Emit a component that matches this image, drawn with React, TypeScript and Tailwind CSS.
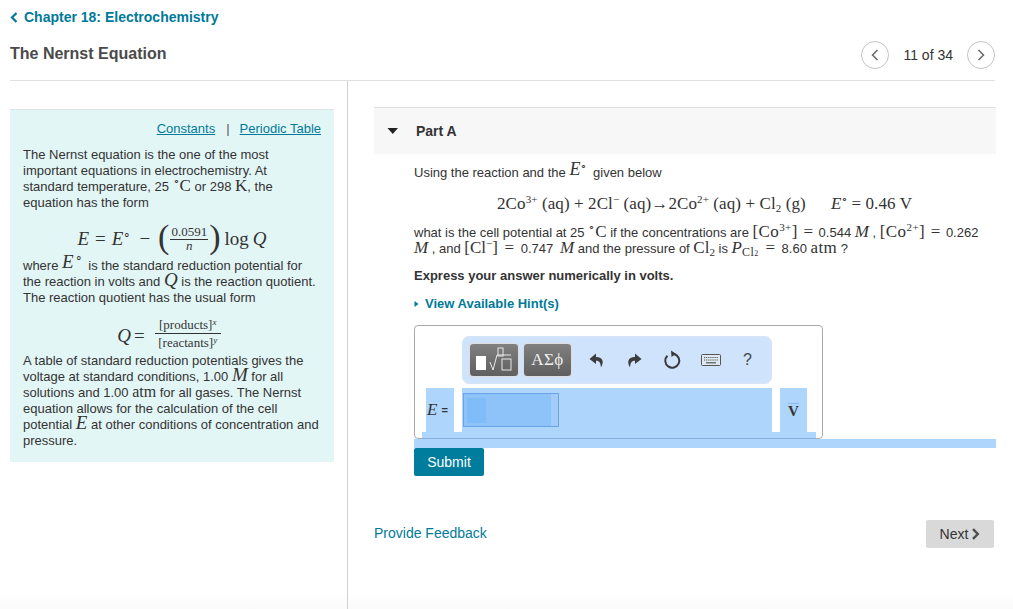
import React from "react";

const serif = "font-['Liberation_Serif',serif]";

function mathCls(className: string) {
  const size = className.includes("text-[") ? "" : "text-[17px]";
  const lead = className.includes("leading-[") ? "" : "leading-[0]";
  return `${serif} ${size} ${lead} ${className}`;
}
function I({ children, className = "" }: { children: React.ReactNode; className?: string }) {
  return <span className={`italic ${mathCls(className)}`}>{children}</span>;
}
function R({ children, className = "" }: { children: React.ReactNode; className?: string }) {
  return <span className={mathCls(className)}>{children}</span>;
}
function Sup({ children }: { children: React.ReactNode }) {
  return <span className="relative top-[-6px] text-[11px] leading-[0]">{children}</span>;
}
function Sub({ children }: { children: React.ReactNode }) {
  return <span className="relative top-[3px] text-[11px] leading-[0]">{children}</span>;
}
function L({ children, className = "" }: { children: React.ReactNode; className?: string }) {
  return <div className={`h-4 leading-4 whitespace-nowrap ${className}`}>{children}</div>;
}

function Undo({ flip = false }: { flip?: boolean }) {
  return (
    <svg width="15" height="15" viewBox="0 0 15 15" className={flip ? "-scale-x-100" : ""}>
      <path d="M7 0.5 L0.5 6 L7 11 V7.8 C10 7.8 11.6 9.2 12 14.5 C15 9.5 14.5 4 7 4 Z" fill="#3d3d3d" />
    </svg>
  );
}

export default function App() {
  return (
    <div className="w-[1013px] h-[609px] overflow-hidden bg-[linear-gradient(to_bottom,#ffffff_97%,#fafafa_100%)] font-['Liberation_Sans',sans-serif] text-[#333] text-[13px]">
      <header className="mx-[10px] w-[985px] h-[81px] border-b border-[#e0e0e0] pt-[9px]">
        <div className="flex items-center gap-[5px] h-4 text-[14px] font-bold text-[#007a99]">
          <svg width="9" height="11" viewBox="0 0 9 11">
            <path d="M6.5 1 L2 5.5 L6.5 10" fill="none" stroke="#007a99" strokeWidth="2.2" />
          </svg>
          <span>Chapter 18: Electrochemistry</span>
        </div>
        <div className="flex items-center justify-between mt-[13px]">
          <h1 className="text-[16px] font-bold text-[#4a4a4a] leading-[30px]">The Nernst Equation</h1>
          <div className="flex items-center mt-[3px]">
            <button className="w-7 h-7 rounded-full border border-[#c4c4c4] flex items-center justify-center">
              <svg width="10" height="14" viewBox="0 0 10 14"><path d="M7.5 2 L2.5 7 L7.5 12" fill="none" stroke="#666" strokeWidth="1.5" /></svg>
            </button>
            <span className="ml-[14px] mr-[14px] text-[14px] text-[#333]">11 of 34</span>
            <button className="w-7 h-7 rounded-full border border-[#c4c4c4] flex items-center justify-center">
              <svg width="10" height="14" viewBox="0 0 10 14"><path d="M2.5 2 L7.5 7 L2.5 12" fill="none" stroke="#666" strokeWidth="1.5" /></svg>
            </button>
          </div>
        </div>
      </header>

      <div className="flex h-[528px]">
        <aside className="w-[348px] shrink-0 border-r border-[#d0d0d0] pl-[10px] pr-[13px] pt-[28px]">
          <div className="h-[353px] bg-[#e3f6f6] border-t border-[#dbe5e5] px-[13px] pt-[11px]">
            <div className="flex justify-end gap-[10px] h-4 leading-4 text-[#007a99]">
              <span className="underline mr-px">Constants</span>
              <span className="text-[#555]">|</span>
              <span className="underline">Periodic Table</span>
            </div>
            <div className="mt-[10px]">
              <L>The Nernst equation is the one of the most</L>
              <L>important equations in electrochemistry. At</L>
              <L>standard temperature, 25 <R><Sup>∘</Sup>C</R> or 298 <R>K</R>, the</L>
              <L>equation has the form</L>
            </div>
            <div className="h-[43px] mt-[3px] pt-[6px] flex items-center justify-center">
              <I className="text-[19px] leading-[20px]">E</I>
              <R className="text-[19px] leading-[20px] mx-[6px]">=</R>
              <I className="text-[19px] leading-[20px]">E</I>
              <R className="relative top-[-4px] text-[12px] leading-[20px]">∘</R>
              <R className="text-[19px] leading-[20px] mx-[8px]">−</R>
              <R className="text-[34px] leading-[36px] font-thin relative top-[-2px]">(</R>
              <span className="flex flex-col items-center mx-[1px]">
                <R className="text-[13px] leading-[14px] border-b border-[#333] px-[1px]">0.0591</R>
                <I className="text-[13px] leading-[12px]">n</I>
              </span>
              <R className="text-[34px] leading-[36px] font-thin relative top-[-2px]">)</R>
              <R className="text-[19px] leading-[20px] ml-[4px] mr-[4px]">log</R>
              <I className="text-[19px] leading-[20px]">Q</I>
            </div>
            <div className="pt-px -mb-px">
              <L>where <I className="text-[19px] relative top-[-2px]">E</I><R className="relative top-[-8px] text-[12px] ml-px">∘</R> <span className="ml-[2px]">is the standard reduction potential for</span></L>
              <L>the reaction in volts and <I className="text-[19px]">Q</I> is the reaction quotient.</L>
              <L>The reaction quotient has the usual form</L>
            </div>
            <div className="h-[39px] mt-[9px] flex items-center justify-center pr-[6px]">
              <I className="text-[19px] leading-[20px] relative top-[2px]">Q</I>
              <R className="text-[19px] leading-[20px] mx-[3px] relative top-[2px]">=</R>
              <span className="flex flex-col items-center ml-[7px]">
                <R className="text-[13px] leading-[17px] border-b border-[#333] w-[66px] text-center whitespace-nowrap">[products]<I className="text-[9px] relative top-[-4px]">x</I></R>
                <R className="text-[13px] leading-[18px] whitespace-nowrap">[reactants]<I className="text-[9px] relative top-[-4px]">y</I></R>
              </span>
            </div>
            <div>
              <L>A table of standard reduction potentials gives the</L>
              <L>voltage at standard conditions, 1.00 <I className="text-[19px]">M</I> for all</L>
              <L>solutions and 1.00 <R className="text-[16px]">atm</R> for all gases. The Nernst</L>
              <L>equation allows for the calculation of the cell</L>
              <L>potential <I className="text-[19px]">E</I> at other conditions of concentration and</L>
              <L>pressure.</L>
            </div>
          </div>
        </aside>

        <main className="w-[649px] pl-[26px]">
          <div className="mt-[26px] w-[622px] h-[47px] bg-[#f7f7f7] border-t border-[#e0e0e0] flex items-center">
            <svg width="12" height="8" viewBox="0 0 12 8" className="ml-[13px]"><path d="M0.5 1 H11 L5.75 7 Z" fill="#222" /></svg>
            <span className="ml-[17px] font-bold text-[14px] text-[#333]">Part A</span>
          </div>

          <div className="pl-[40px] w-[622px]">
            <L className="mt-[11px]">Using the reaction and the <I className="text-[18px] relative top-[-2px]">E</I><R className="relative top-[-7px] text-[11px]">∘</R> <span className="ml-[2px]">given below</span></L>
            <div className={`h-4 leading-4 mt-[15px] ml-[83px] whitespace-nowrap tracking-[0.1px] ${serif} text-[17px]`}>
              2Co<Sup>3+</Sup> (aq) + 2Cl<Sup>−</Sup> (aq)→2Co<Sup>2+</Sup> (aq) + Cl<Sub>2</Sub> (g)
              <I className="ml-[25px] text-[17px]">E</I><Sup>∘</Sup><span className="ml-[3px]">= 0.46 V</span>
            </div>
            <L className="mt-[13px]">what is the cell potential at 25 <R><Sup>∘</Sup>C</R> if the concentrations are <R className="tracking-[0.4px]">[Co<Sup>3+</Sup>]</R> <R className="mx-[2px]">=</R> 0.544 <I>M</I> , <R className="tracking-[0.4px]">[Co<Sup>2+</Sup>]</R> <R className="mx-[2px]">=</R> 0.262</L>
            <L><I>M</I> , and <R>[Cl<Sup>−</Sup>]</R> <R className="mx-[3px]">=</R> 0.747 <I className="ml-[3px]">M</I> and the pressure of <R>Cl<Sub>2</Sub></R> is <I>P</I><R className="text-[12px] relative top-[3px] tracking-[0.5px]">Cl<span className="text-[8px]">2</span></R> <R className="mx-[3px]">=</R> 8.60 <R className="tracking-[0.4px]">atm</R> ?</L>
            <L className="mt-[11px] font-bold">Express your answer numerically in volts.</L>
            <div className="mt-[12px] h-4 leading-4 flex items-center font-bold text-[#007a99]">
              <svg width="5" height="8" viewBox="0 0 5 8" className="mr-[6px]"><path d="M0.5 1 L4.5 4 L0.5 7 Z" fill="#007a99" /></svg>
              View Available Hint(s)
            </div>

            <section className="mt-[13px] w-[409px] h-[114px] border border-[#aaa] rounded-[4px] flex flex-col">
              <div className="ml-[47px] mt-[10px] w-[310px] h-[48px] bg-[#cfe4fc] rounded-[7px] border border-[#d6e4f5] flex items-center pl-[6px]">
                <button className="w-[50px] h-[34px] rounded-[4px] border border-[#ddd] bg-gradient-to-b from-[#808080] to-[#5f5f5f] flex items-center justify-center">
                  <svg width="40" height="28" viewBox="0 0 40 28">
                    <rect x="2" y="10" width="10" height="14" fill="#fff" />
                    <rect x="24" y="2" width="5" height="8" fill="none" stroke="#e8e8e8" strokeWidth="1" />
                    <path d="M16 16 L19 24 L23 9 H37" fill="none" stroke="#e8e8e8" strokeWidth="1" />
                    <rect x="28" y="13" width="9" height="11" fill="none" stroke="#e8e8e8" strokeWidth="1" />
                  </svg>
                </button>
                <button className={`ml-[4px] w-[49px] h-[34px] rounded-[4px] border border-[#ddd] bg-gradient-to-b from-[#808080] to-[#5f5f5f] text-[#f0f0f0] text-[17px] tracking-[0.5px] ${serif}`}>ΑΣϕ</button>
                <div className="ml-[17px] flex"><Undo /></div>
                <div className="ml-[23px] flex"><Undo flip /></div>
                <svg width="19" height="20" viewBox="0 0 19 20" className="ml-[21px]">
                  <path d="M12 4.2 A7 7 0 1 1 5.2 5" fill="none" stroke="#3a3a3a" strokeWidth="2" transform="rotate(-8 9.5 11)" />
                  <path d="M8 0.5 L13 3.8 L8.5 7 Z" fill="#3a3a3a" />
                </svg>
                <svg width="20" height="12" viewBox="0 0 20 12" className="ml-[19px]">
                  <rect x="0.5" y="0.5" width="19" height="11" rx="1" fill="#dfe9f3" stroke="#555" />
                  <path d="M3 3.5 H17 M3 6 H17" stroke="#555" strokeWidth="1.2" strokeDasharray="1.2 0.9" />
                  <path d="M5 8.8 H15" stroke="#555" strokeWidth="1.2" />
                </svg>
                <span className="ml-[22px] text-[16px] text-[#444]">?</span>
              </div>

              <div className="mt-[4px] flex flex-1 relative">
                <div className="ml-[11px] w-[28px] bg-[#aed5fb] flex items-center">
                  <I className="text-[17px] leading-[18px] ml-px">E</I>
                  <span className="ml-[4px] text-[11px] font-bold">=</span>
                </div>
                <div className="ml-[8px] w-[310px] bg-[#aed5fb] flex items-start pt-[5px]">
                  <div className="ml-[1px] w-[96px] h-[34px] bg-[#8dc3f8] border border-[#6ba3e8] flex items-center relative">
                    <div className="ml-[3px] w-[19px] h-[25px] bg-[#80bdf8]" />
                    <div className="absolute right-0 top-0 w-[7px] h-full bg-[#a3cdf8]" />
                  </div>
                </div>
                <div className="ml-[8px] w-[27px] bg-[#aed5fb] flex items-center justify-center">
                  <R className="text-[15px] leading-[14px] font-semibold border-t border-[#8fb8e8]">V</R>
                </div>
              </div>
              <div className="ml-[7px] w-[394px] h-[7px] -mb-px bg-[#aed5fb] border-b border-[#85b0dc] shrink-0" />
            </section>
            <div className="w-[582px] h-[9px] bg-[#aed5fb] shrink-0" />

            <button className="block w-[70px] h-[28px] rounded-[2px] bg-[#007c9c] text-white text-[14px] font-normal">Submit</button>
          </div>

          <div className="mt-[44px] flex items-center justify-between w-[620px]">
            <span className="text-[14px] text-[#007a99] pb-[2px]">Provide Feedback</span>
            <button className="w-[68px] h-[28px] rounded-[2px] bg-[#d9d9d9] text-[14px] text-[#333] flex items-center justify-center gap-[3px]">
              Next
              <svg width="9" height="12" viewBox="0 0 9 12"><path d="M2 1.2 L6.8 6 L2 10.8" fill="none" stroke="#4d4d4d" strokeWidth="2.4" /></svg>
            </button>
          </div>
        </main>
      </div>
    </div>
  );
}
